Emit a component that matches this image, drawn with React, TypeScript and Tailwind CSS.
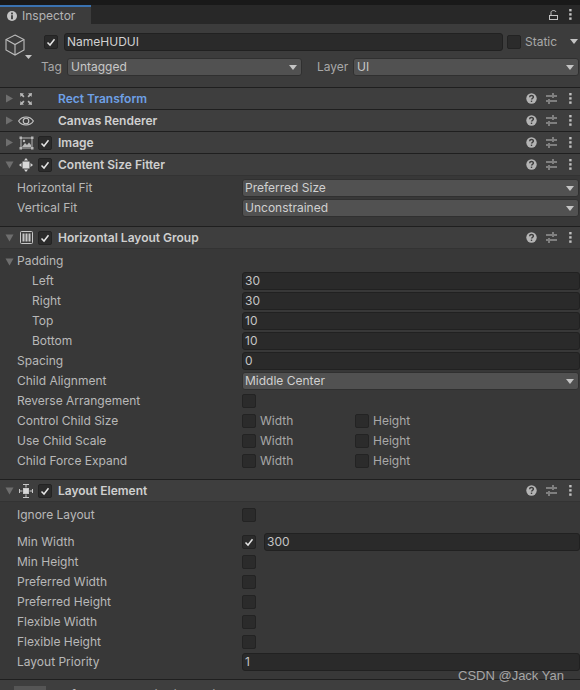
import type { ReactNode } from 'react';

const font = { fontFamily: 'Inter, "Noto Sans", sans-serif' };

function Triangle({ open, className = '' }: { open?: boolean; className?: string }) {
  return (
    <svg width="9" height="9" viewBox="0 0 9 9" className={`shrink-0 ${className}`}>
      {open ? <path d="M0.5 1.5H8.5L4.5 8.5Z" fill="#6e6e6e" /> : <path d="M1 0.5L8 4.5L1 8.5Z" fill="#6e6e6e" />}
    </svg>
  );
}

function Arrow() {
  return (
    <svg width="8" height="5" viewBox="0 0 8 5" className="shrink-0">
      <path d="M0 0H8L4 5Z" fill="#c4c4c4" />
    </svg>
  );
}

function Check({ checked }: { checked?: boolean }) {
  return (
    <div className="flex h-[14px] w-[14px] shrink-0 items-center justify-center rounded-[2px] border border-[#232323] bg-[#2b2b2b]">
      {checked && (
        <svg width="10" height="10" viewBox="0 0 10 10">
          <path d="M1.5 5.5L4 8L8.5 2.2" fill="none" stroke="#e4e4e4" strokeWidth="1.5" />
        </svg>
      )}
    </div>
  );
}

function Help() {
  return (
    <svg width="11" height="11" viewBox="0 0 11 11">
      <circle cx="5.5" cy="5.5" r="5.2" fill="#b4b4b4" />
      <path d="M3.6 4.2C3.7 2 7.4 2 7.4 4.1C7.4 5.3 5.5 5.3 5.5 6.6" fill="none" stroke="#3e3e3e" strokeWidth="1.4" />
      <rect x="4.8" y="7.6" width="1.4" height="1.4" fill="#3e3e3e" />
    </svg>
  );
}

function Sliders() {
  return (
    <svg width="11" height="11" viewBox="0 0 11 11">
      <path d="M0 3H6M8 3H11M0 8H2M4 8H11M7 0V5M3 6V11" fill="none" stroke="#c0c0c0" strokeWidth="1" />
    </svg>
  );
}

function Kebab({ color = '#c0c0c0' }: { color?: string }) {
  return (
    <svg width="3" height="11" viewBox="0 0 3 11" className="shrink-0">
      <rect x="0.2" y="0" width="2.4" height="2.4" fill={color} />
      <rect x="0.2" y="4.2" width="2.4" height="2.4" fill={color} />
      <rect x="0.2" y="8.4" width="2.4" height="2.4" fill={color} />
    </svg>
  );
}

const iconMove = (
  <svg width="14" height="14" viewBox="0 0 14 14" fill="#b8b8b8">
    <path d="M1 1L5 1.5L3.8 2.6L5.5 4.3L4.3 5.5L2.6 3.8L1.5 5Z" />
    <path d="M13 1L9 1.5L10.2 2.6L8.5 4.3L9.7 5.5L11.4 3.8L12.5 5Z" />
    <path d="M1 13L5 12.5L3.8 11.4L5.5 9.7L4.3 8.5L2.6 10.2L1.5 9Z" />
    <path d="M13 13L9 12.5L10.2 11.4L8.5 9.7L9.7 8.5L11.4 10.2L12.5 9Z" />
  </svg>
);

const iconEye = (
  <svg width="16" height="12" viewBox="0 0 16 12" fill="none" stroke="#c8c8c8" strokeWidth="1.1">
    <path d="M0.6 6C4 0.6 12 0.6 15.4 6C12 11.4 4 11.4 0.6 6Z" />
    <circle cx="8" cy="6" r="2.8" />
  </svg>
);

const iconImage = (
  <svg width="15" height="14" viewBox="0 0 15 14">
    <rect x="2" y="2" width="11" height="10" fill="none" stroke="#b8b8b8" />
    <path d="M3 11L6 7L8 9L10 6.5L12 9V11Z" fill="#b8b8b8" />
    <circle cx="5" cy="5" r="1.2" fill="#b8b8b8" />
    <rect x="0.5" y="0.5" width="2.5" height="2.5" fill="#b8b8b8" />
    <rect x="12" y="0.5" width="2.5" height="2.5" fill="#b8b8b8" />
    <rect x="0.5" y="11" width="2.5" height="2.5" fill="#b8b8b8" />
    <rect x="12" y="11" width="2.5" height="2.5" fill="#b8b8b8" />
  </svg>
);

const iconFitter = (
  <svg width="14" height="14" viewBox="0 0 14 14" fill="#d8d8d8">
    <rect x="3.5" y="3.5" width="7" height="7" />
    <path d="M7 0L9 2.5H5Z" />
    <path d="M7 14L9 11.5H5Z" />
    <path d="M0 7L2.5 5V9Z" />
    <path d="M14 7L11.5 5V9Z" />
  </svg>
);

const iconColumns = (
  <svg width="13" height="13" viewBox="0 0 13 13">
    <rect x="0.5" y="0.5" width="12" height="12" rx="1" fill="none" stroke="#c8c8c8" />
    <rect x="2.5" y="2.5" width="2" height="8" fill="#c8c8c8" />
    <rect x="5.5" y="2.5" width="2" height="8" fill="#c8c8c8" />
    <rect x="8.5" y="2.5" width="2" height="8" fill="#c8c8c8" />
  </svg>
);

const iconElement = (
  <svg width="14" height="14" viewBox="0 0 14 14" fill="none" stroke="#c8c8c8">
    <rect x="4.5" y="4.5" width="5" height="5" fill="#d8d8d8" />
    <path d="M4 0.5H10M7 0.5V3.5M4 13.5H10M7 10.5V13.5M0.5 5V9M0.5 7H3.5M13.5 5V9M10.5 7H13.5" />
  </svg>
);

function Header({ label, icon, open, checkbox, blue }: { label: string; icon: ReactNode; open?: boolean; checkbox?: boolean; blue?: boolean }) {
  return (
    <div className="flex h-[22px] items-center border-t border-[#1f1f1f] bg-[#3e3e3e]">
      <Triangle open={open} className="ml-[5px]" />
      <div className="ml-[3px] flex w-[18px] justify-center">{icon}</div>
      <div className="ml-[3px] w-[14px]">{checkbox && <Check checked />}</div>
      <span className={`ml-[6px] text-[12px] font-semibold ${blue ? 'text-[#6ea0e6]' : 'text-[#cfcfcf]'}`}>{label}</span>
      <div className="ml-auto flex items-center pr-[8px]">
        <Help />
        <div className="ml-[9px]"><Sliders /></div>
        <div className="ml-[12px]"><Kebab /></div>
      </div>
    </div>
  );
}

function Row({ label, indent, children }: { label: string; indent?: boolean; children?: ReactNode }) {
  return (
    <div className="flex h-5 items-center">
      <span className={`w-[242px] shrink-0 text-[12px] text-[#b8b8b8] ${indent ? 'pl-[32px]' : 'pl-[17px]'}`}>{label}</span>
      {children}
    </div>
  );
}

function Input({ value }: { value: string }) {
  return (
    <div className="flex h-[18px] min-w-0 flex-1 items-center rounded-[3px] border border-[#212121] bg-[#2a2a2a] pl-[2px] text-[12px] text-[#c4c4c4]">
      {value}
    </div>
  );
}

function Select({ value }: { value: string }) {
  return (
    <div className="mr-[1px] flex h-[18px] flex-1 items-center justify-between rounded-[3px] border border-[#303030] bg-[#515151] pl-[2px] pr-[4px] text-[12px] text-[#d0d0d0]">
      {value}
      <Arrow />
    </div>
  );
}

function Pair() {
  return (
    <>
      <Check />
      <span className="ml-[4px] w-[95px] text-[12px] text-[#a8a8a8]">Width</span>
      <Check />
      <span className="ml-[4px] text-[12px] text-[#a8a8a8]">Height</span>
    </>
  );
}

export default function App() {
  return (
    <div className="relative h-[690px] w-[580px] overflow-hidden bg-[#383838]" style={font}>
      <div className="h-[5px] bg-[#191919]" />
      {/* tab bar */}
      <div className="flex h-[19px] items-stretch bg-[#282828]">
        <div className="flex w-[91px] items-center border-t-2 border-[#3a72b0] bg-[#3c3c3c] pl-[7px]">
          <svg width="10" height="10" viewBox="0 0 10 10">
            <circle cx="5" cy="5" r="5" fill="#c4c4c4" />
            <rect x="4.1" y="1.6" width="1.8" height="1.8" fill="#3c3c3c" />
            <rect x="4.1" y="4.2" width="1.8" height="4" fill="#3c3c3c" />
          </svg>
          <span className="ml-[5px] text-[12px] text-[#b4b4b4]">Inspector</span>
        </div>
        <div className="ml-auto flex items-center pr-[8px]">
          <svg width="9" height="10" viewBox="0 0 9 10" fill="none" stroke="#c4c4c4">
            <path d="M2 5V2.5C2 0 6.5 0 7 2" />
            <rect x="0.5" y="5.5" width="8" height="4" />
          </svg>
          <div className="ml-[11px]"><Kebab color="#c4c4c4" /></div>
        </div>
      </div>

      {/* game object header */}
      <div className="h-[63px] bg-[#3c3c3c]">
        <div className="flex h-[34px] items-start pt-[9px]">
          <div className="relative ml-[5px] mt-[1px] h-[22px] w-[20px]">
            <svg width="20" height="22" viewBox="0 0 20 22" fill="none" stroke="#bdbdbd" strokeWidth="1.1">
              <path d="M10 1L19 5.5V16L10 21L1 16V5.5Z" />
              <path d="M1 5.5L10 10.5L19 5.5M10 10.5V21" />
            </svg>
            <svg width="7" height="4" viewBox="0 0 7 4" className="absolute left-[20px] top-[21px]">
              <path d="M0 0H7L3.5 4Z" fill="#c4c4c4" />
            </svg>
          </div>
          <div className="ml-[19px] mt-[2px]"><Check checked /></div>
          <div className="ml-[6px] flex h-[18px] w-[439px] items-center rounded-[3px] border border-[#212121] bg-[#2a2a2a] pl-[2px] text-[12px] text-[#d2d2d2]">NameHUDUI</div>
          <div className="ml-[4px] mt-[2px]"><Check /></div>
          <span className="ml-[4px] text-[12px] leading-[18px] text-[#a8a8a8]">Static</span>
          <div className="ml-[13px] mt-[6px] flex"><Arrow /></div>
        </div>
        <div className="flex h-[18px] items-center">
          <span className="ml-[41px] w-[26px] text-[12px] text-[#a8a8a8]">Tag</span>
          <div className="flex h-[18px] w-[235px] items-center justify-between rounded-[3px] border border-[#303030] bg-[#515151] pl-[3px] pr-[4px] text-[12px] text-[#c8c8c8]">Untagged<Arrow /></div>
          <span className="ml-[15px] w-[36px] text-[12px] text-[#a8a8a8]">Layer</span>
          <div className="flex h-[18px] w-[226px] items-center justify-between rounded-[3px] border border-[#303030] bg-[#515151] pl-[3px] pr-[4px] text-[12px] text-[#c8c8c8]">UI<Arrow /></div>
        </div>
      </div>

      <Header label="Rect Transform" icon={iconMove} blue />
      <Header label="Canvas Renderer" icon={iconEye} />
      <Header label="Image" icon={iconImage} checkbox />
      <Header label="Content Size Fitter" icon={iconFitter} open checkbox />
      <div className="h-[51px] border-t border-[#333333] pt-[2px]">
        <Row label="Horizontal Fit"><Select value="Preferred Size" /></Row>
        <Row label="Vertical Fit"><Select value="Unconstrained" /></Row>
      </div>

      <Header label="Horizontal Layout Group" icon={iconColumns} open checkbox />
      <div className="h-[231px] border-t border-[#333333] pt-[2px]">
        <div className="flex h-5 items-center pl-[5px]">
          <Triangle open />
          <span className="ml-[3px] text-[12px] text-[#b8b8b8]">Padding</span>
        </div>
        <Row label="Left" indent><Input value="30" /></Row>
        <Row label="Right" indent><Input value="30" /></Row>
        <Row label="Top" indent><Input value="10" /></Row>
        <Row label="Bottom" indent><Input value="10" /></Row>
        <Row label="Spacing"><Input value="0" /></Row>
        <Row label="Child Alignment"><Select value="Middle Center" /></Row>
        <Row label="Reverse Arrangement"><Check /></Row>
        <Row label="Control Child Size"><Pair /></Row>
        <Row label="Use Child Scale"><Pair /></Row>
        <Row label="Child Force Expand"><Pair /></Row>
      </div>

      <Header label="Layout Element" icon={iconElement} open checkbox />
      <div className="h-[178px] border-t border-[#333333] pt-[3px]">
        <Row label="Ignore Layout"><Check /></Row>
        <div className="h-[7px]" />
        <Row label="Min Width">
          <Check checked />
          <div className="ml-[8px] flex min-w-0 flex-1"><Input value="300" /></div>
        </Row>
        <Row label="Min Height"><Check /></Row>
        <Row label="Preferred Width"><Check /></Row>
        <Row label="Preferred Height"><Check /></Row>
        <Row label="Flexible Width"><Check /></Row>
        <Row label="Flexible Height"><Check /></Row>
        <Row label="Layout Priority"><Input value="1" /></Row>
      </div>

      {/* material row, cut off by the window edge */}
      <div className="flex h-[11px] border-t border-[#1f1f1f] bg-[#3e3e3e]">
        <div className="ml-[14px] mt-[6px] h-[8px] w-[32px] bg-[#555555]" />
        <span className="ml-[8px] mt-[6px] text-[13px] text-[#b8b8b8]">Default UI Material (Material)</span>
      </div>

      {/* watermark */}
      <span className="absolute left-[458px] top-[666px] text-[13px] text-[#a6a6a6]" style={{ fontFamily: '"Liberation Sans", sans-serif' }}>CSDN @Jack Yan</span>
    </div>
  );
}
